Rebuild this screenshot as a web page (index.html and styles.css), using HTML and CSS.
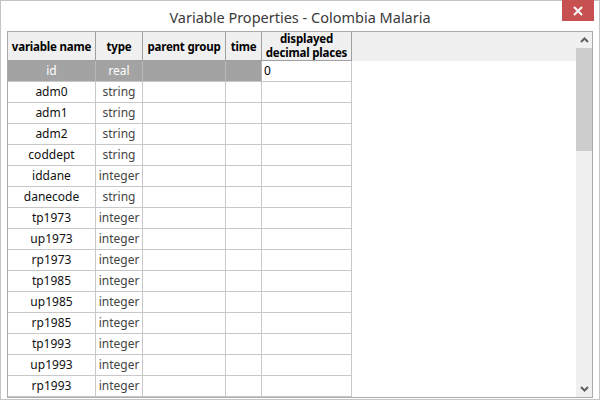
FILE: index.html
```html
<!DOCTYPE html>
<html>
<head>
<meta charset="utf-8">
<link rel="stylesheet" href="styles.css">
</head>
<body>
<div class="window">
  <div class="titlebar">
    <span class="title">Variable Properties - Colombia Malaria</span>
    <div class="close">
      <svg width="10" height="10" viewBox="0 0 10 10"><path d="M1 1 L9 9 M9 1 L1 9" stroke="#fff" stroke-width="2" fill="none"/></svg>
    </div>
  </div>
  <div class="client">
    <div class="gridbox">
      <div class="tablearea">
        <div class="headrow">
          <div class="grid">
            <div class="hc">variable name</div>
            <div class="hc">type</div>
            <div class="hc">parent group</div>
            <div class="hc">time</div>
            <div class="hc two"><span class="ln">displayed</span><span class="ln">decimal places</span></div>
          </div>
        </div>
        <div class="grid body">
          <div class="c sel">id</div><div class="c sel t">real</div><div class="c sel"></div><div class="c sel"></div><div class="c edit">0</div>
          <div class="c">adm0</div><div class="c t">string</div><div class="c"></div><div class="c"></div><div class="c"></div>
          <div class="c">adm1</div><div class="c t">string</div><div class="c"></div><div class="c"></div><div class="c"></div>
          <div class="c">adm2</div><div class="c t">string</div><div class="c"></div><div class="c"></div><div class="c"></div>
          <div class="c">coddept</div><div class="c t">string</div><div class="c"></div><div class="c"></div><div class="c"></div>
          <div class="c">iddane</div><div class="c t">integer</div><div class="c"></div><div class="c"></div><div class="c"></div>
          <div class="c">danecode</div><div class="c t">string</div><div class="c"></div><div class="c"></div><div class="c"></div>
          <div class="c">tp1973</div><div class="c t">integer</div><div class="c"></div><div class="c"></div><div class="c"></div>
          <div class="c">up1973</div><div class="c t">integer</div><div class="c"></div><div class="c"></div><div class="c"></div>
          <div class="c">rp1973</div><div class="c t">integer</div><div class="c"></div><div class="c"></div><div class="c"></div>
          <div class="c">tp1985</div><div class="c t">integer</div><div class="c"></div><div class="c"></div><div class="c"></div>
          <div class="c">up1985</div><div class="c t">integer</div><div class="c"></div><div class="c"></div><div class="c"></div>
          <div class="c">rp1985</div><div class="c t">integer</div><div class="c"></div><div class="c"></div><div class="c"></div>
          <div class="c">tp1993</div><div class="c t">integer</div><div class="c"></div><div class="c"></div><div class="c"></div>
          <div class="c">up1993</div><div class="c t">integer</div><div class="c"></div><div class="c"></div><div class="c"></div>
          <div class="c">rp1993</div><div class="c t">integer</div><div class="c"></div><div class="c"></div><div class="c"></div>
        </div>
      </div>
      <div class="scrollbar">
        <div class="sbtn">
          <svg width="9" height="6" viewBox="0 0 9 6"><path d="M1 5 L4.5 1.5 L8 5" stroke="#606060" stroke-width="2" fill="none"/></svg>
        </div>
        <div class="thumb"></div>
        <div class="track"></div>
        <div class="sbtn">
          <svg width="9" height="6" viewBox="0 0 9 6"><path d="M1 1 L4.5 4.5 L8 1" stroke="#606060" stroke-width="2" fill="none"/></svg>
        </div>
      </div>
    </div>
  </div>
</div>
</body>
</html>
```
FILE: styles.css
```css
html, body {
  margin: 0;
  padding: 0;
  background: #ffffff;
}
.window {
  width: 600px;
  height: 400px;
  box-sizing: border-box;
  border: 1px solid #c4c4c4;
  background: #ffffff;
  display: flex;
  flex-direction: column;
  font-family: "Noto Sans", "Open Sans", sans-serif;
}
.titlebar {
  height: 30px;
  flex: none;
  position: relative;
  display: flex;
  justify-content: center;
  align-items: center;
}
.title {
  font-size: 14.5px;
  color: #3a3a3a;
  margin-top: 1px;
}
.close {
  position: absolute;
  top: -1px;
  left: 561px;
  width: 32px;
  height: 21px;
  background: #c75050;
  display: flex;
  align-items: center;
  justify-content: center;
}
.client {
  flex: 1;
  padding: 0 6px 7px 6px;
  display: flex;
}
.gridbox {
  flex: 1;
  border: 1px solid #ababab;
  display: flex;
  overflow: hidden;
}
.tablearea {
  flex: 1;
  overflow: hidden;
  background: #ffffff;
}
.headrow {
  background: #f0f0f0;
}
.grid {
  display: grid;
  grid-template-columns: 88px 47px 83px 36px 90px;
}
.hc {
  box-sizing: border-box;
  height: 29px;
  border-right: 1px solid #a0a0a0;
  border-bottom: 1px solid #a0a0a0;
  font-size: 11.5px;
  font-weight: bold;
  color: #000;
  display: flex;
  align-items: center;
  justify-content: center;
  text-align: center;
  white-space: nowrap;
  letter-spacing: -0.2px;
}
.hc.two {
  flex-direction: column;
}
.ln {
  display: block;
  line-height: 14px;
  height: 14px;
}
.c {
  box-sizing: border-box;
  height: 21px;
  border-right: 1px solid #c8c8c8;
  border-bottom: 1px solid #c8c8c8;
  font-size: 12px;
  color: #111;
  display: flex;
  align-items: center;
  justify-content: center;
  white-space: nowrap;
  padding-bottom: 1px;
}
.c.t {
  color: #444;
}
.c.sel {
  background: #a3a3a3;
  color: #ffffff;
  border-right-color: #b8b8b8;
}
.c.edit {
  justify-content: flex-start;
  padding-left: 2px;
  color: #000;
}
.scrollbar {
  width: 16px;
  flex: none;
  background: #f0f0f0;
  display: flex;
  flex-direction: column;
}
.sbtn {
  height: 16px;
  flex: none;
  display: flex;
  align-items: center;
  justify-content: center;
}
.thumb {
  height: 103px;
  flex: none;
  background: #cdcdcd;
}
.track {
  flex: 1;
}
```
